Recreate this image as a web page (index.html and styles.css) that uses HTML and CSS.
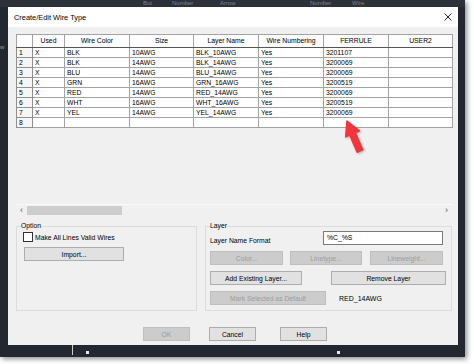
FILE: index.html
```html
<!DOCTYPE html>
<html lang="en">

<head>
    <meta charset="UTF-8">
    <title>Create/Edit Wire Type</title>
    <link rel="stylesheet" href="styles.css">
</head>

<body>
    <div class="screen">
        <!-- CAD drawing behind the dialog -->
        <div class="cad-strip">
            <span class="cad-text" style="left:143px">But</span>
            <span class="cad-text" style="left:172px">Number</span>
            <span class="cad-text" style="left:220px">Arrow</span>
            <span class="cad-text" style="left:310px">Number</span>
            <span class="cad-text" style="left:352px">Wire</span>
        </div>
        <span class="cad-text side" style="left:0;top:44px">w</span>
        <span class="grip" style="left:86px"></span>
        <span class="grip" style="left:337px"></span>
        <span class="cad-line"></span>

        <div class="dialog">
            <div class="titlebar">
                <span>Create/Edit Wire Type</span>
                <svg class="close" width="8" height="8" viewBox="0 0 8 8">
                    <path d="M0.5 0.5 L7.5 7.5 M7.5 0.5 L0.5 7.5" stroke="#111" stroke-width="0.9" />
                </svg>
            </div>

            <div class="content">
                <div class="grid">
                    <table class="wires">
                        <colgroup>
                            <col style="width:16px"><col style="width:32px"><col style="width:65px">
                            <col style="width:64px"><col style="width:65px"><col style="width:65px">
                            <col style="width:65px"><col style="width:64px">
                        </colgroup>
                        <thead>
                            <tr>
                                <th></th><th>Used</th><th>Wire Color</th><th>Size</th>
                                <th>Layer Name</th><th>Wire Numbering</th><th>FERRULE</th><th>USER2</th>
                            </tr>
                        </thead>
                        <tbody>
                            <tr><td class="num">1</td><td>X</td><td>BLK</td><td>10AWG</td><td>BLK_10AWG</td><td>Yes</td><td>3201107</td><td></td></tr>
                            <tr><td class="num">2</td><td>X</td><td>BLK</td><td>14AWG</td><td>BLK_14AWG</td><td>Yes</td><td>3200069</td><td></td></tr>
                            <tr><td class="num">3</td><td>X</td><td>BLU</td><td>14AWG</td><td>BLU_14AWG</td><td>Yes</td><td>3200069</td><td></td></tr>
                            <tr><td class="num">4</td><td>X</td><td>GRN</td><td>16AWG</td><td>GRN_16AWG</td><td>Yes</td><td>3200519</td><td></td></tr>
                            <tr><td class="num">5</td><td>X</td><td>RED</td><td>14AWG</td><td>RED_14AWG</td><td>Yes</td><td>3200069</td><td></td></tr>
                            <tr><td class="num">6</td><td>X</td><td>WHT</td><td>16AWG</td><td>WHT_16AWG</td><td>Yes</td><td>3200519</td><td></td></tr>
                            <tr><td class="num">7</td><td>X</td><td>YEL</td><td>14AWG</td><td>YEL_14AWG</td><td>Yes</td><td>3200069</td><td></td></tr>
                            <tr><td class="num">8</td><td></td><td></td><td></td><td></td><td></td><td></td><td></td></tr>
                        </tbody>
                    </table>
                </div>

                <div class="scrollbar">
                    <span class="scroll-arrow">&lsaquo;</span>
                    <span class="thumb"></span>
                    <span class="scroll-arrow right">&rsaquo;</span>
                </div>

                <div class="groups">
                    <fieldset class="group option">
                        <legend>Option</legend>
                        <label class="check"><span class="box"></span>Make All Lines Valid Wires</label>
                        <button class="btn import">Import...</button>
                    </fieldset>

                    <fieldset class="group layer">
                        <legend>Layer</legend>
                        <div class="row format">
                            <span>Layer Name Format</span>
                            <span class="field">%C_%S</span>
                        </div>
                        <div class="row">
                            <button class="btn disabled w73">Color...</button>
                            <button class="btn disabled w72">Linetype...</button>
                            <button class="btn disabled w73">Lineweight...</button>
                        </div>
                        <div class="row">
                            <button class="btn add">Add Existing Layer...</button>
                            <button class="btn remove">Remove Layer</button>
                        </div>
                        <div class="row">
                            <button class="btn disabled mark">Mark Selected as Default</button>
                            <span class="current">RED_14AWG</span>
                        </div>
                    </fieldset>
                </div>

                <div class="actions">
                    <button class="btn disabled action">OK</button>
                    <button class="btn action cancel">Cancel</button>
                    <button class="btn action help">Help</button>
                </div>
            </div>
        </div>

        <!-- red call-out arrow -->
        <svg class="pointer" width="30" height="40" viewBox="0 0 30 40">
            <polygon points="7,3 19.5,12.9 15.4,14.7 22.8,31.8 17.2,34.2 9.8,17.1 5.7,18.9"
                fill="#f2353c" stroke="#f2353c" stroke-width="1.5" stroke-linejoin="round" />
        </svg>
    </div>
</body>

</html>
```

FILE: styles.css
```css
/* page */
body {
    margin: 0;
    background: #fff;
    width: 474px;
    height: 364px;
    overflow: hidden;
    font-family: 'Liberation Sans', Arial, sans-serif;
    font-size: 6.8px;
    color: #000;
}

.screen {
    position: relative;
    width: 465px;
    height: 357px;
    padding: 7px 0 0 8px;
    box-sizing: border-box;
    background: #232730;
    box-shadow: 2px 2px 5px rgba(0, 0, 0, 0.45);
}

/* background drawing */
.cad-strip {
    position: absolute;
    left: 0;
    top: 0;
    width: 465px;
    height: 7px;
    background: #2c313a;
}

.cad-text {
    position: absolute;
    top: 0;
    font-size: 6px;
    line-height: 6px;
    color: #7c8493;
}

.cad-text.side {
    color: #9aa2ae;
}

.grip {
    position: absolute;
    top: 351px;
    width: 3px;
    height: 3px;
    background: #e8e8e8;
}

.cad-line {
    position: absolute;
    left: 72px;
    top: 345px;
    width: 1px;
    height: 10px;
    background: #cfcfcf;
}

/* dialog */
.dialog {
    width: 450px;
    height: 338px;
    background: #f0f0f0;
    display: flex;
    flex-direction: column;
}

.titlebar {
    height: 20px;
    flex-shrink: 0;
    background: #fff;
    display: flex;
    align-items: center;
    justify-content: space-between;
    padding: 0 6px;
    font-size: 7.4px;
}

.content {
    padding: 7px 6px 0 8px;
    display: flex;
    flex-direction: column;
}

/* wire table */
.grid {
    height: 170px;
}

.wires {
    border-collapse: collapse;
    table-layout: fixed;
    width: 436px;
    background: #fff;
}

.wires th,
.wires td {
    border: 1px solid #a3a3a3;
    padding: 0 2px;
    white-space: nowrap;
    overflow: hidden;
    font-weight: normal;
    line-height: 8px;
}

.wires th {
    height: 12px;
    text-align: center;
    border-bottom: 1px solid #555;
    background: #fdfdfd;
}

.wires td {
    height: 9px;
    text-align: left;
}

.wires td.num {
    background: #f6f6f6;
    border-color: #8f8f8f;
}

/* scrollbar */
.scrollbar {
    height: 11px;
    border-top: 1px solid #fbfbfb;
    display: flex;
    align-items: center;
    font-size: 9px;
    color: #555;
}

.scroll-arrow {
    width: 11px;
    text-align: center;
    line-height: 9px;
}

.scroll-arrow.right {
    margin-left: auto;
}

.thumb {
    width: 95px;
    height: 9px;
    background: #cdcdcd;
}

/* group boxes */
.groups {
    display: flex;
    gap: 8px;
    margin-top: 6px;
}

.group {
    margin: 0;
    height: 89px;
    box-sizing: border-box;
    border: 1px solid #dcdcdc;
    padding: 0 4px;
}

.group legend {
    padding: 0;
    margin-left: 0;
    line-height: 8px;
}

.option {
    width: 181px;
}

.layer {
    width: 247px;
}

.check {
    display: flex;
    align-items: center;
    gap: 2px;
    margin: 2px 0 0 2px;
}

.box {
    width: 8px;
    height: 8px;
    border: 1px solid #333;
    background: #fff;
}

.btn {
    font-family: inherit;
    font-size: 6.8px;
    height: 14px;
    padding: 0;
    border: 1px solid #adadad;
    background: #e1e1e1;
    color: #000;
    box-sizing: border-box;
}

.btn.disabled {
    background: #cccccc;
    border-color: #bfbfbf;
    color: #9c9c9c;
}

.import {
    display: block;
    width: 100px;
    margin: 5px 0 0 3px;
}

.row {
    display: flex;
    align-items: center;
    margin-top: 6px;
}

.row.format {
    margin-top: 1px;
}

.field {
    margin-left: auto;
    margin-right: 4px;
    width: 120px;
    height: 14px;
    box-sizing: border-box;
    border: 1px solid #7a7a7a;
    background: #fff;
    padding: 0 3px;
    line-height: 12px;
}

.format span:first-child {
    margin-top: 4px;
}

.w73 {
    width: 73px;
}

.w72 {
    width: 72px;
    margin: 0 8px 0 7px;
}

.add {
    width: 92px;
}

.remove {
    width: 115px;
    margin-left: 29px;
}

.mark {
    width: 116px;
}

.current {
    margin-left: 13px;
    font-size: 7px;
}

/* bottom buttons */
.actions {
    display: flex;
    margin: 16px 0 0 127px;
}

.action {
    width: 47px;
    height: 14px;
}

.cancel {
    margin-left: 19px;
}

.help {
    margin-left: 24px;
}

.pointer {
    position: absolute;
    left: 340px;
    top: 118px;
    filter: drop-shadow(1px 1px 1px rgba(0, 0, 0, 0.25));
}
```
